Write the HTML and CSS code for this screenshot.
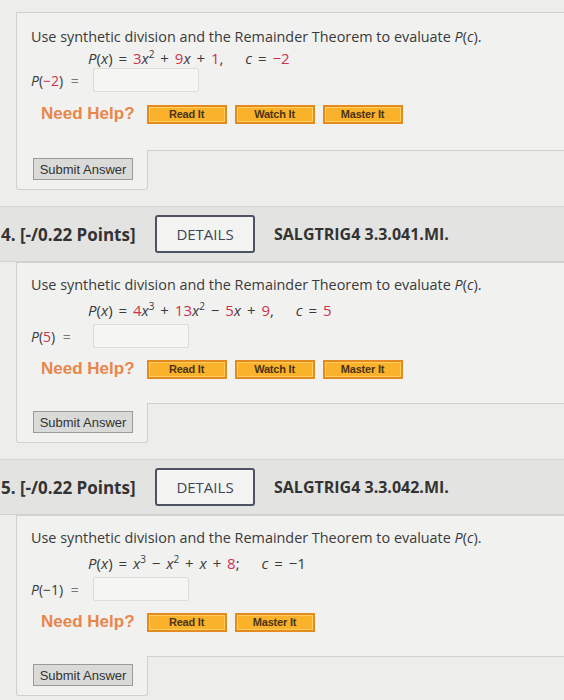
FILE: index.html
```html
<!DOCTYPE html>
<html>
<head>
<meta charset="utf-8">
<link rel="stylesheet" href="styles.css">
</head>
<body>
<div class="page">

  <section class="question first">
    <div class="content">
      <p class="prompt">Use synthetic division and the Remainder Theorem to evaluate <i>P</i>(<i>c</i>).</p>
      <p class="formula"><i>P</i>(<i>x</i>) = <span class="r">3</span><i>x</i><sup>2</sup> + <span class="r">9</span><i>x</i> + <span class="r">1</span>, <span class="cval"><i>c</i> = <span class="r">−2</span></span></p>
      <div class="answer"><span class="lbl"><i>P</i>(<span class="r">−2</span>) <span class="eq">=</span></span><span class="input"></span></div>
      <div class="help">
        <span class="need">Need Help?</span>
        <span class="hbtn">Read It</span>
        <span class="hbtn">Watch It</span>
        <span class="hbtn">Master It</span>
      </div>
    </div>
    <div class="submit-row"><div class="tab"><span class="submit">Submit Answer</span></div><div class="rest"></div></div>
  </section>

  <section class="question">
    <header class="qhead">
      <span class="pts">4. [-/0.22 Points]</span>
      <span class="details">DETAILS</span>
      <span class="code">SALGTRIG4 3.3.041.MI.</span>
    </header>
    <div class="content">
      <p class="prompt">Use synthetic division and the Remainder Theorem to evaluate <i>P</i>(<i>c</i>).</p>
      <p class="formula"><i>P</i>(<i>x</i>) = <span class="r">4</span><i>x</i><sup>3</sup> + <span class="r">13</span><i>x</i><sup>2</sup> − <span class="r">5</span><i>x</i> + <span class="r">9</span>, <span class="cval"><i>c</i> = <span class="r">5</span></span></p>
      <div class="answer"><span class="lbl"><i>P</i>(<span class="r">5</span>) <span class="eq">=</span></span><span class="input short"></span></div>
      <div class="help">
        <span class="need">Need Help?</span>
        <span class="hbtn">Read It</span>
        <span class="hbtn">Watch It</span>
        <span class="hbtn">Master It</span>
      </div>
    </div>
    <div class="submit-row"><div class="tab"><span class="submit">Submit Answer</span></div><div class="rest"></div></div>
  </section>

  <section class="question">
    <header class="qhead">
      <span class="pts">5. [-/0.22 Points]</span>
      <span class="details">DETAILS</span>
      <span class="code">SALGTRIG4 3.3.042.MI.</span>
    </header>
    <div class="content">
      <p class="prompt">Use synthetic division and the Remainder Theorem to evaluate <i>P</i>(<i>c</i>).</p>
      <p class="formula"><i>P</i>(<i>x</i>) = <i>x</i><sup>3</sup> − <i>x</i><sup>2</sup> + <i>x</i> + <span class="r">8</span>; <span class="cval"><i>c</i> = −1</span></p>
      <div class="answer"><span class="lbl"><i>P</i>(−1) <span class="eq">=</span></span><span class="input short"></span></div>
      <div class="help">
        <span class="need">Need Help?</span>
        <span class="hbtn">Read It</span>
        <span class="hbtn">Master It</span>
      </div>
    </div>
    <div class="submit-row"><div class="tab"><span class="submit">Submit Answer</span></div><div class="rest"></div></div>
  </section>

</div>
</body>
</html>
```

FILE: styles.css
```css
html, body {
  margin: 0;
  padding: 0;
}
body {
  background: #ededeb;
  font-family: "Open Sans", "DejaVu Sans", sans-serif;
  color: #3a3a3a;
  width: 564px;
  height: 700px;
  overflow: hidden;
}
.page {
  padding-top: 12px;
}
.question {
  margin-bottom: 16px;
}
.qhead {
  height: 56px;
  box-sizing: border-box;
  background: #e3e3e1;
  border-top: 1px solid #d6d6d4;
  border-bottom: 1px solid #d2d2d0;
  display: flex;
  align-items: center;
}
.pts {
  font-weight: 700;
  font-size: 17px;
  color: #333;
  margin-left: 1px;
  width: 154px;
}
.details {
  width: 100px;
  height: 38px;
  box-sizing: border-box;
  border: 2px solid #4d5363;
  border-radius: 3px;
  background: #f3f3f1;
  display: flex;
  align-items: center;
  justify-content: center;
  font-size: 15px;
  color: #3d4556;
}
.code {
  margin-left: 19px;
  font-weight: 700;
  font-size: 16px;
  color: #333;
}
.content {
  margin-left: 16px;
  border: 1px solid #d0d0ce;
  border-right: none;
  border-bottom: none;
  background: #f1f1ef;
  padding: 11px 0 0 14px;
  height: 141px;
  box-sizing: border-box;
}
.prompt {
  margin: 0;
  height: 22px;
  line-height: 22px;
  font-size: 14.4px;
  color: #3a3a3a;
}
.formula {
  margin: 0 0 0 57px;
  height: 28px;
  line-height: 28px;
  font-size: 15px;
  word-spacing: 2px;
  color: #3a3a3a;
}
.formula sup {
  font-size: 10px;
  line-height: 0;
}
.cval {
  margin-left: 16px;
}
.r {
  color: #c9344f;
}
.answer {
  height: 24px;
  display: flex;
  align-items: center;
  font-size: 14px;
}
.lbl {
  width: 62px;
}
.eq {
  color: #777;
  margin-left: 4px;
}
.input {
  width: 104px;
  height: 22px;
  border: 1px solid #dcdcda;
  background: #f5f5f3;
  border-radius: 2px;
}
.input.short {
  width: 94px;
}
.help {
  margin-top: 10px;
  margin-left: 10px;
  height: 22px;
  display: flex;
  align-items: center;
  gap: 8px;
}
.need {
  font-family: "Liberation Sans", Arial, sans-serif;
  font-weight: 700;
  font-size: 17px;
  color: #e8864b;
  margin-right: 4px;
}
.hbtn {
  width: 80px;
  height: 19px;
  box-sizing: border-box;
  border: 2px solid #e58a1f;
  box-shadow: inset 0 0 0 1px #ffd060;
  background: #fab22b;
  font-family: "Liberation Sans", Arial, sans-serif;
  font-weight: 700;
  font-size: 11px;
  color: #4a3415;
  display: flex;
  align-items: center;
  justify-content: center;
  letter-spacing: -0.2px;
}
.first .content {
  padding-top: 14px;
  height: 138px;
}
.first .prompt {
  height: 19px;
  line-height: 19px;
}
.first .formula {
  height: 22px;
  line-height: 24px;
}
.first .help {
  margin-top: 11px;
}
.submit-row {
  display: flex;
  height: 40px;
}
.tab {
  margin-left: 16px;
  width: 132px;
  box-sizing: border-box;
  border: 1px solid #d0d0ce;
  border-top: none;
  border-radius: 0 0 3px 3px;
  background: #f1f1ef;
  padding: 8px 0 0 16px;
}
.rest {
  flex: 1;
  border-top: 1px solid #d0d0ce;
}
.submit {
  display: flex;
  align-items: center;
  justify-content: center;
  width: 100px;
  height: 22px;
  box-sizing: border-box;
  border: 1px solid #9a9a9a;
  background: #dadad8;
  font-family: "Liberation Sans", Arial, sans-serif;
  font-size: 13px;
  color: #333;
}
```
